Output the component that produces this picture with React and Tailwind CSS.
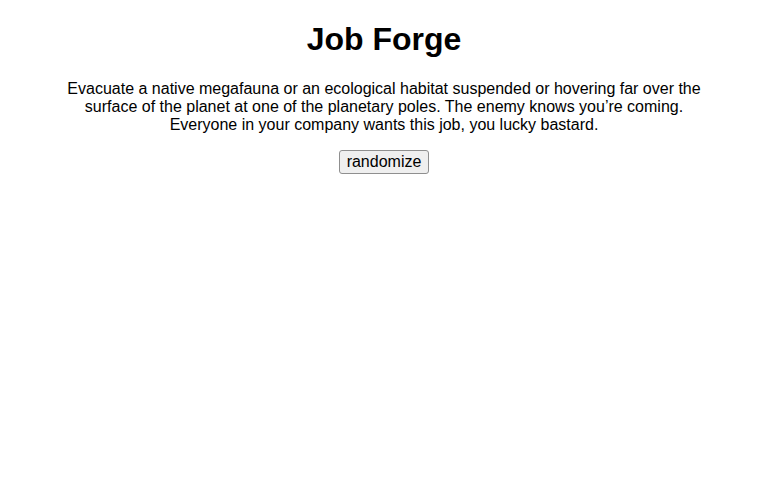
export default function App() {
  return (
    <div className="min-h-[480px] bg-white text-black font-['Liberation_Sans',Arial,sans-serif] pt-[21.44px]">
      <div className="mx-auto max-w-[640px] text-center">
        <h1 className="text-[32px] leading-[normal] font-bold">Job Forge</h1>
        <p className="mt-[21.44px] text-[16px] leading-[normal]">
          Evacuate a native megafauna or an ecological habitat suspended or hovering far over the surface of the planet at one of the planetary poles. The enemy knows you’re coming. Everyone in your company wants this job, you lucky bastard.
        </p>
        <button className="mt-[16px] text-[16px] leading-[normal] px-[7px] py-[2px] bg-[#efefef] border border-[#8f8f8f] rounded-[3px] text-black">
          randomize
        </button>
      </div>
    </div>
  );
}
